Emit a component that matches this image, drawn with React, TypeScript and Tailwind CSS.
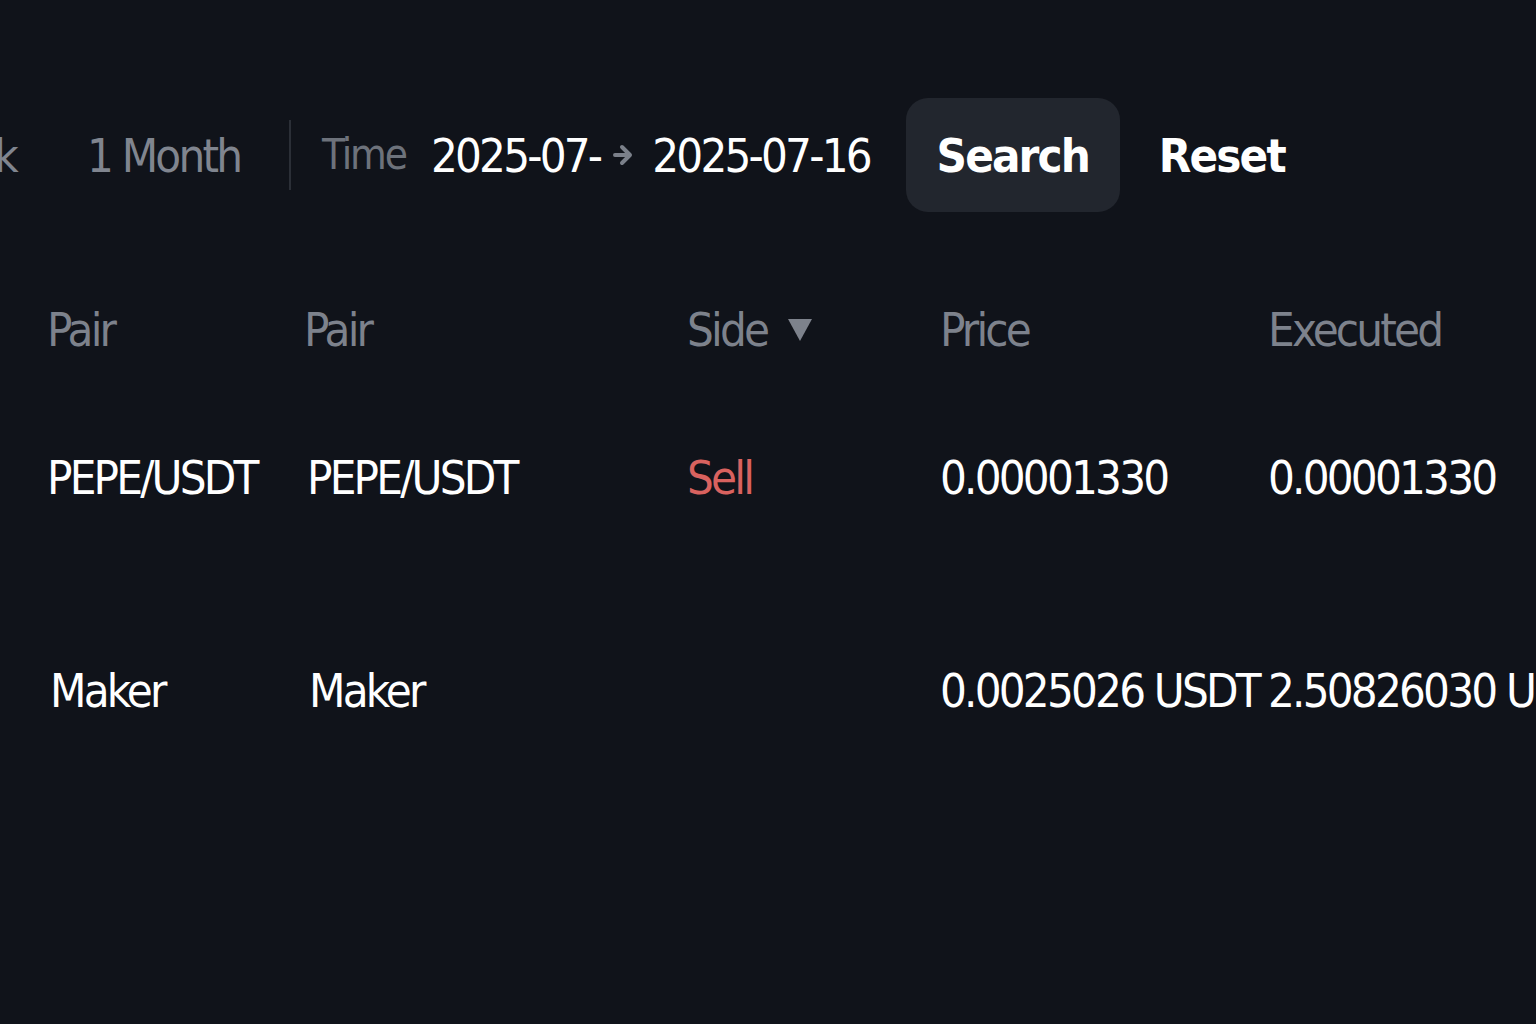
const font = "font-['DejaVu_Sans_Condensed','Liberation_Sans',sans-serif]";

function ArrowRight() {
  return (
    <svg width="22" height="26" viewBox="0 0 22 26" fill="none" className="shrink-0">
      <path d="M3 13h14M10 5l8 8-8 8" stroke="#7b808a" strokeWidth="4" strokeLinecap="round" strokeLinejoin="round" />
    </svg>
  );
}

function SortCaret() {
  return (
    <svg width="26" height="24" viewBox="0 0 26 24" className="shrink-0">
      <path d="M1 1h24L13 23z" fill="#7d828c" />
    </svg>
  );
}

const cols = "grid grid-cols-[304px_383px_253px_328px_1fr]";

export default function App() {
  return (
    <div className={`min-h-screen w-full overflow-hidden bg-[#10131a] ${font}`}>
      {/* Filters */}
      <div className="flex items-center pt-[98px] text-[47px] leading-none tracking-[-0.06em]">
        <span className="-ml-[184px] w-[200px] shrink-0 text-right text-[#80858f] whitespace-nowrap">1 Week</span>
        <span className="ml-[71px] w-[161px] shrink-0 text-[#80858f] whitespace-nowrap">1 Month</span>
        <div className="ml-[41px] h-[70px] w-[2px] shrink-0 bg-[#2b2f37]" />
        <span className="ml-[31px] shrink-0 text-[42px] tracking-[-0.05em] text-[#6d727b]">Time</span>
        <span className="ml-[25px] shrink-0 text-white whitespace-nowrap">2025-07-</span>
        <span className="ml-[12px] mr-[18px]"><ArrowRight /></span>
        <span className="shrink-0 text-white whitespace-nowrap">2025-07-16</span>
        <button className="ml-[36px] flex h-[114px] w-[214px] shrink-0 items-center justify-center rounded-[22px] bg-[#22262e] font-bold tracking-[-0.04em] text-white">
          Search
        </button>
        <button className="ml-[39px] shrink-0 font-bold tracking-[-0.04em] text-white">Reset</button>
      </div>

      {/* Table */}
      <div className="mt-[94px] text-[47px] leading-none tracking-[-0.06em]">
        <div className={`${cols} text-[#7d828c]`}>
          <span className="pl-[47px]">Pair</span>
          <span>Pair</span>
          <span className="flex items-center gap-[20px]">
            Side <SortCaret />
          </span>
          <span>Price</span>
          <span>Executed</span>
        </div>

        <div className={`${cols} mt-[101px] text-white whitespace-nowrap`}>
          <span className="pl-[47px]">PEPE/USDT</span>
          <span className="pl-[3px]">PEPE/USDT</span>
          <span className="text-[#d9625f]">Sell</span>
          <span>0.00001330</span>
          <span>0.00001330</span>
        </div>

        <div className={`${cols} mt-[166px] text-white whitespace-nowrap`}>
          <span className="pl-[50px]">Maker</span>
          <span className="pl-[5px]">Maker</span>
          <span />
          <span>0.0025026 USDT</span>
          <span>2.50826030 USDT</span>
        </div>
      </div>
    </div>
  );
}
